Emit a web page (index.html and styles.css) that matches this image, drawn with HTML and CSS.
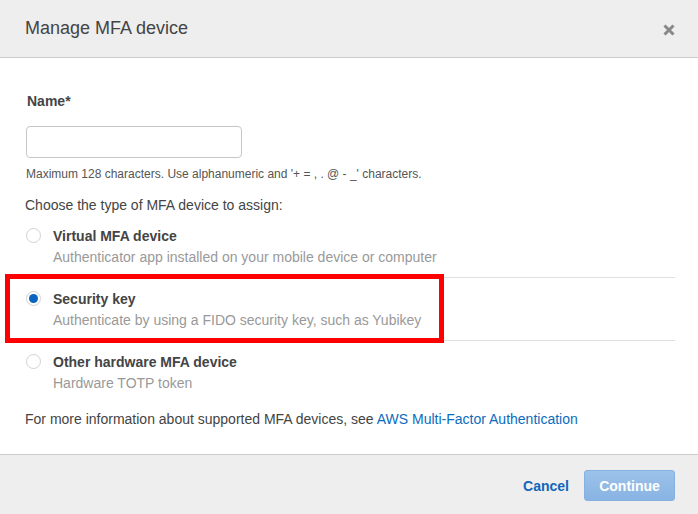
FILE: index.html
```html
<!DOCTYPE html>
<html>
<head>
<meta charset="utf-8">
<link rel="stylesheet" href="styles.css">
</head>
<body>
<div class="modal">
  <div class="header">
    <h1 class="title">Manage MFA device</h1>
    <button class="close" aria-label="Close">
      <svg width="12" height="12" viewBox="0 0 12 12"><path d="M1.5 1.5 L10.5 10.5 M10.5 1.5 L1.5 10.5" stroke="#888" stroke-width="3" stroke-linecap="butt"/></svg>
    </button>
  </div>
  <div class="content">
    <label class="field-label">Name*</label>
    <input class="text-input" type="text">
    <div class="hint">Maximum 128 characters. Use alphanumeric and '+ = , . @ - _' characters.</div>
    <div class="choose">Choose the type of MFA device to assign:</div>
    <div class="options">
      <div class="option">
        <span class="radio"></span>
        <div class="option-text">
          <div class="option-title">Virtual MFA device</div>
          <div class="option-desc">Authenticator app installed on your mobile device or computer</div>
        </div>
      </div>
      <div class="option">
        <span class="radio checked"></span>
        <div class="option-text">
          <div class="option-title">Security key</div>
          <div class="option-desc">Authenticate by using a FIDO security key, such as Yubikey</div>
        </div>
      </div>
      <div class="option">
        <span class="radio"></span>
        <div class="option-text">
          <div class="option-title">Other hardware MFA device</div>
          <div class="option-desc">Hardware TOTP token</div>
        </div>
      </div>
    </div>
    <div class="more">For more information about supported MFA devices, see <a class="link" href="#">AWS Multi-Factor Authentication</a></div>
  </div>
  <div class="footer">
    <a class="cancel" href="#">Cancel</a>
    <button class="continue" disabled>Continue</button>
  </div>
  <div class="highlight"></div>
</div>
</body>
</html>
```

FILE: styles.css
```css
html, body {
  margin: 0;
  padding: 0;
  background: #fff;
}
body {
  font-family: "Liberation Sans", Arial, sans-serif;
  color: #444;
  font-size: 14px;
}
.modal {
  position: relative;
  width: 698px;
  height: 514px;
  display: flex;
  flex-direction: column;
  background: #fff;
}
.header {
  height: 57px;
  background: #eeeeee;
  border-bottom: 1px solid #cccccc;
  display: flex;
  align-items: center;
  justify-content: space-between;
  padding: 0 23px 0 25px;
}
.title {
  margin: 0;
  font-size: 18px;
  font-weight: normal;
  color: #444;
  line-height: 24px;
  padding-bottom: 1px;
}
.close {
  border: 0;
  background: none;
  padding: 0;
  width: 12px;
  height: 12px;
  margin-top: 2px;
  display: flex;
}
.content {
  flex: 1;
  padding: 33px 23px 0 25px;
  display: flex;
  flex-direction: column;
  align-items: flex-start;
}
.field-label {
  font-weight: bold;
  font-size: 14px;
  line-height: 20px;
  color: #444;
  padding-left: 2px;
}
.text-input {
  margin-top: 15px;
  margin-left: 1px;
  width: 216px;
  height: 32px;
  box-sizing: border-box;
  border: 1px solid #c6c6c6;
  border-radius: 4px;
  background: #fff;
}
.hint {
  margin-top: 9px;
  margin-left: 1px;
  font-size: 12px;
  line-height: 15px;
  color: #555;
}
.choose {
  margin-top: 13px;
  line-height: 20px;
  color: #444;
}
.options {
  align-self: stretch;
  display: flex;
  flex-direction: column;
}
.option {
  display: flex;
  align-items: flex-start;
  gap: 12px;
  padding: 11px 0 10px 1px;
  border-bottom: 1px solid #e0e0e0;
}
.option:last-child {
  border-bottom: 0;
}
.radio {
  width: 15px;
  height: 15px;
  box-sizing: border-box;
  border: 1px solid #d2d2d2;
  border-radius: 50%;
  background: #fff;
  margin-top: 2px;
  display: flex;
  align-items: center;
  justify-content: center;
  flex: none;
}
.radio.checked::after {
  content: "";
  width: 9px;
  height: 9px;
  border-radius: 50%;
  background: #0b64c0;
}
.option-title {
  font-weight: bold;
  line-height: 20px;
  color: #444;
}
.option-desc {
  margin-top: 1px;
  line-height: 20px;
  color: #999;
}
.more {
  margin-top: 6px;
  line-height: 20px;
  color: #444;
}
.link {
  color: #0b6cbd;
  text-decoration: none;
}
.footer {
  height: 60px;
  box-sizing: border-box;
  background: #eeeeee;
  border-top: 1px solid #cccccc;
  display: flex;
  align-items: center;
  justify-content: flex-end;
  padding: 2px 23px 0 25px;
  gap: 15px;
}
.cancel {
  font-weight: bold;
  color: #1166bb;
  text-decoration: none;
  line-height: 20px;
}
.continue {
  width: 91px;
  height: 31px;
  border: 1px solid #86b0e0;
  border-radius: 3px;
  background: linear-gradient(#9cc2ea, #88b3e2);
  color: #fff;
  font-family: "Liberation Sans", Arial, sans-serif;
  font-weight: bold;
  font-size: 14px;
  padding: 0;
}
.highlight {
  position: absolute;
  left: 5px;
  top: 274px;
  width: 439px;
  height: 69px;
  box-sizing: border-box;
  border: 5px solid #ff0000;
  pointer-events: none;
}
```
